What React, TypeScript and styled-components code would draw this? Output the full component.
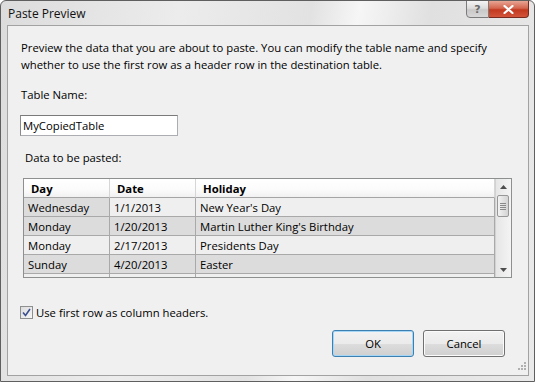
import styled, { createGlobalStyle } from "styled-components";

const GlobalStyle = createGlobalStyle`
  html, body {
    margin: 0;
    padding: 0;
    background: #ffffff;
  }
  body {
    font-family: "Open Sans", "Noto Sans", sans-serif;
    font-size: 11.3px;
    color: #000;
  }
`;

const Window = styled.div`
  width: 535px;
  height: 382px;
  box-sizing: border-box;
  display: flex;
  flex-direction: column;
  border: 1px solid #5f5f5f;
  border-radius: 6px 6px 0 0;
  overflow: hidden;
  background: linear-gradient(
    100deg,
    #dcdcdc 0%,
    #ececec 30%,
    #e2e2e2 52%,
    #f6f6f6 60%,
    #e0e0e0 72%,
    #eaeaea 100%
  );
`;

const TitleBar = styled.div`
  height: 24px;
  display: flex;
  align-items: flex-start;
  padding-left: 7px;
`;

const Title = styled.span`
  line-height: 25px;
  font-size: 12px;
  color: #111;
`;

const Controls = styled.div`
  margin-left: auto;
  margin-right: 5px;
  margin-top: -1px;
  display: flex;
`;

const CaptionButton = styled.div<{ $close?: boolean }>`
  width: ${(p) => (p.$close ? 40 : 23)}px;
  height: 18px;
  box-sizing: border-box;
  display: flex;
  align-items: center;
  justify-content: center;
  border: 1px solid ${(p) => (p.$close ? "#7a2a1c" : "#7b7b7b")};
  border-left-width: ${(p) => (p.$close ? 0 : 1)}px;
  border-radius: ${(p) => (p.$close ? "0 0 4px 0" : "0 0 0 4px")};
  background: ${(p) =>
    p.$close
      ? "linear-gradient(#e8a594 0%, #d4664e 45%, #c2391f 55%, #d2543a 100%)"
      : "linear-gradient(#f4f4f4 0%, #dcdcdc 45%, #c8c8c8 55%, #d8d8d8 100%)"};
  color: ${(p) => (p.$close ? "#fff" : "#6a6a6a")};
  font-family: "DejaVu Sans", sans-serif;
  font-weight: bold;
  font-size: 11px;
`;

const Client = styled.div`
  position: relative;
  flex: 1;
  margin: 0 5px 5px 6px;
  border: 1px solid #a2a2a2;
  background: #f0f0f0;
  padding: 13px 23px 18px 13px;
  display: flex;
  flex-direction: column;
`;

const Description = styled.p`
  margin: 0;
  line-height: 17px;
  white-space: nowrap;
`;

const Label = styled.div<{ $indent?: number; $gap: number }>`
  margin: ${(p) => p.$gap}px 0 0 ${(p) => p.$indent ?? 0}px;
  line-height: 17px;
`;

const NameInput = styled.input`
  margin: 12px 0 0 -1px;
  width: 158px;
  height: 21px;
  box-sizing: border-box;
  border: 1px solid #abadb3;
  border-top-color: #7a7a7a;
  border-left-color: #8a8a8a;
  background: #fff;
  padding: 0 2px;
  font-family: inherit;
  font-size: inherit;
  outline: none;
`;

const TableFrame = styled.div`
  margin: 12px 0 0 2px;
  width: 489px;
  height: 100px;
  box-sizing: border-box;
  border: 1px solid #8e8f8f;
  display: flex;
  background: #f0f0f0;
  overflow: hidden;
`;

const Grid = styled.div`
  flex: 1;
  display: grid;
  grid-template-columns: 86px 86px 1fr;
  grid-auto-rows: 19px;
  overflow: hidden;
`;

const HeadCell = styled.div`
  display: flex;
  align-items: center;
  padding-left: 7px;
  font-weight: bold;
  background: linear-gradient(#ffffff 0%, #fbfbfb 60%, #f1f1f1 100%);
  border-right: 1px solid #d6d6d6;
  border-bottom: 1px solid #a5a5a5;
`;

const Cell = styled.div<{ $dark?: boolean }>`
  display: flex;
  align-items: center;
  padding-left: 4px;
  white-space: nowrap;
  background: ${(p) => (p.$dark ? "#dcdcdc" : "#efefef")};
  border-right: 1px solid #a9a9a9;
  border-bottom: 1px solid #a9a9a9;
`;

const ScrollBar = styled.div`
  width: 15px;
  border-left: 1px solid #d2d2d2;
  display: flex;
  flex-direction: column;
  background: linear-gradient(90deg, #e6e6e6, #f4f4f4);
`;

const Arrow = styled.div`
  height: 15px;
  display: flex;
  align-items: center;
  justify-content: center;
`;

const Track = styled.div`
  flex: 1;
  padding-top: 1px;
`;

const Thumb = styled.div`
  margin-left: 1px;
  width: 12px;
  height: 22px;
  box-sizing: border-box;
  border: 1px solid #979797;
  border-radius: 2px;
  background: linear-gradient(90deg, #f3f3f3, #e2e2e2 50%, #d4d4d4);
  display: flex;
  flex-direction: column;
  justify-content: center;
  align-items: center;
  gap: 1px;
`;

const Grip = styled.span`
  width: 6px;
  height: 1px;
  background: #8a8a8a;
`;

const CheckRow = styled.label`
  margin-top: 26px;
  margin-left: -1px;
  display: flex;
  align-items: center;
  gap: 3px;
  line-height: 17px;
`;

const CheckBox = styled.span`
  width: 13px;
  height: 13px;
  box-sizing: border-box;
  border: 1px solid #8e8f8f;
  background: linear-gradient(135deg, #dcdcdc, #f6f6f6);
  display: flex;
  align-items: center;
  justify-content: center;
`;

const ButtonRow = styled.div`
  margin-top: 9px;
  display: flex;
  justify-content: flex-end;
  gap: 9px;
`;

const DialogButton = styled.button<{ $default?: boolean }>`
  width: 82px;
  height: 27px;
  box-sizing: border-box;
  border: 1px solid ${(p) => (p.$default ? "#3c7fb1" : "#707070")};
  border-radius: 3px;
  background: linear-gradient(#f2f2f2 0%, #ebebeb 50%, #dddddd 51%, #cfcfcf 100%);
  box-shadow: ${(p) =>
    p.$default ? "inset 0 0 0 1px #a5d6f5" : "inset 0 0 0 1px #fbfbfb"};
  font-family: inherit;
  font-size: inherit;
  color: #000;
  padding: 0;
`;

const Grabber = styled.div`
  position: absolute;
  right: 2px;
  bottom: 2px;
`;

const rows = [
  ["Wednesday", "1/1/2013", "New Year's Day"],
  ["Monday", "1/20/2013", "Martin Luther King's Birthday"],
  ["Monday", "2/17/2013", "Presidents Day"],
  ["Sunday", "4/20/2013", "Easter"],
  ["", "", ""],
];

export default function App() {
  return (
    <>
      <GlobalStyle />
      <Window>
        <TitleBar>
          <Title>Paste Preview</Title>
          <Controls>
            <CaptionButton>?</CaptionButton>
            <CaptionButton $close>
              <svg width="11" height="9" viewBox="0 0 11 9">
                <path d="M1.5 1 L9.5 8 M9.5 1 L1.5 8" stroke="#fff" strokeWidth="2.2" strokeLinecap="round" />
              </svg>
            </CaptionButton>
          </Controls>
        </TitleBar>
        <Client>
          <Description>
            Preview the data that you are about to paste. You can modify the table name and specify
            <br />
            whether to use the first row as a header row in the destination table.
          </Description>
          <Label $gap={13}>Table Name:</Label>
          <NameInput defaultValue="MyCopiedTable" />
          <Label $gap={13} $indent={4}>
            Data to be pasted:
          </Label>
          <TableFrame>
            <Grid>
              <HeadCell>Day</HeadCell>
              <HeadCell>Date</HeadCell>
              <HeadCell>Holiday</HeadCell>
              {rows.map((r, i) =>
                r.map((text, j) => (
                  <Cell key={`${i}-${j}`} $dark={i % 2 === 1 || (i === 0 && j === 0)}>
                    {text}
                  </Cell>
                ))
              )}
            </Grid>
            <ScrollBar>
              <Arrow>
                <svg width="7" height="4" viewBox="0 0 7 4">
                  <path d="M0 4 L3.5 0 L7 4 Z" fill="#4d4d4d" />
                </svg>
              </Arrow>
              <Track>
                <Thumb>
                  <Grip />
                  <Grip />
                  <Grip />
                  <Grip />
                </Thumb>
              </Track>
              <Arrow>
                <svg width="7" height="4" viewBox="0 0 7 4">
                  <path d="M0 0 L7 0 L3.5 4 Z" fill="#4d4d4d" />
                </svg>
              </Arrow>
            </ScrollBar>
          </TableFrame>
          <CheckRow>
            <CheckBox>
              <svg width="9" height="9" viewBox="0 0 9 9">
                <path d="M1 4.5 L3.5 7.5 L8 1" stroke="#3b4f8f" strokeWidth="1.6" fill="none" />
              </svg>
            </CheckBox>
            Use first row as column headers.
          </CheckRow>
          <ButtonRow>
            <DialogButton $default>OK</DialogButton>
            <DialogButton>Cancel</DialogButton>
          </ButtonRow>
          <Grabber>
            <svg width="8" height="8" viewBox="0 0 8 8">
              <g fill="#b0b0b0">
                <rect x="6" y="0" width="2" height="2" />
                <rect x="3" y="3" width="2" height="2" />
                <rect x="6" y="3" width="2" height="2" />
                <rect x="0" y="6" width="2" height="2" />
                <rect x="3" y="6" width="2" height="2" />
                <rect x="6" y="6" width="2" height="2" />
              </g>
            </svg>
          </Grabber>
        </Client>
      </Window>
    </>
  );
}
